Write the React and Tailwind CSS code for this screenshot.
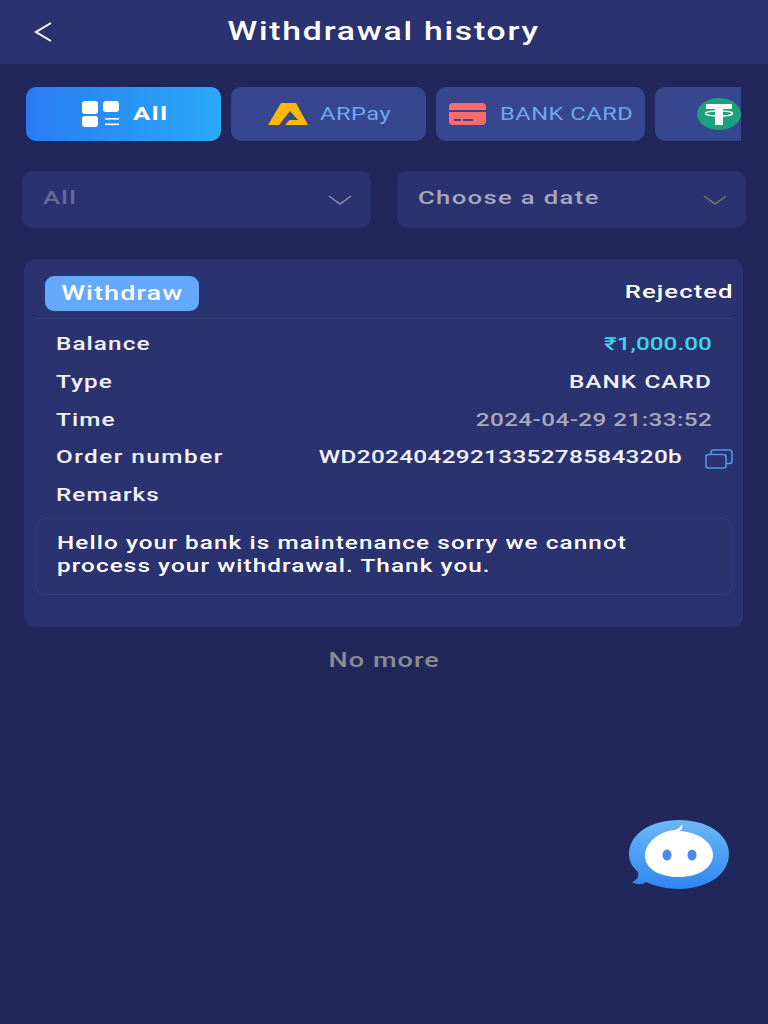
const font = 'font-["Roboto",sans-serif]';

function BackIcon() {
  return (
    <svg width="18" height="20" viewBox="0 0 18 20" fill="none" stroke="#fff" strokeWidth="2" className="absolute left-[34px] top-[22px]">
      <path d="M17 1L2 10L17 19" />
    </svg>
  );
}

function AllIcon() {
  return (
    <svg width="38" height="26" viewBox="0 0 38 26" className="shrink-0">
      <rect x="0" y="0" width="16" height="13" rx="3" fill="#fff" />
      <rect x="21" y="0" width="16" height="11" rx="3" fill="#fff" />
      <rect x="0" y="15" width="16" height="11" rx="3" fill="#fff" />
      <rect x="23" y="17" width="14" height="1.6" fill="#fff" />
      <rect x="23" y="22.5" width="14" height="1.6" fill="#fff" />
    </svg>
  );
}

function ArPayIcon() {
  return (
    <svg width="40" height="22" viewBox="0 0 40 22" className="shrink-0">
      <path d="M13 0H28L40 22H17L21.5 17H30L22 8L11 22H0Z" fill="#fcb900" />
    </svg>
  );
}

function BankIcon() {
  return (
    <svg width="37" height="22" viewBox="0 0 37 22" className="shrink-0">
      <path d="M4 0H33A4 4 0 0 1 37 4V7H0V4A4 4 0 0 1 4 0Z" fill="#ff6b6b" />
      <path d="M0 9H37V18A4 4 0 0 1 33 22H4A4 4 0 0 1 0 18Z" fill="#ff6b6b" />
      <rect x="5" y="16" width="7" height="2" fill="#36478f" />
      <rect x="14" y="16" width="10" height="2" fill="#36478f" />
    </svg>
  );
}

function TetherIcon() {
  return (
    <svg width="44" height="32" viewBox="0 0 44 32" className="shrink-0">
      <ellipse cx="22" cy="16" rx="22" ry="16" fill="#1ba27a" />
      <rect x="9" y="6" width="26" height="5" fill="#fff" />
      <rect x="18" y="6" width="8" height="21" fill="#fff" />
      <ellipse cx="22" cy="15.5" rx="13.5" ry="2.6" fill="none" stroke="#fff" strokeWidth="1.4" />
    </svg>
  );
}

function CopyIcon() {
  return (
    <svg width="28" height="20" viewBox="0 0 28 20" fill="none" stroke="#4f97ec" strokeWidth="1.6" className="mt-[5px]">
      <rect x="1" y="5.5" width="20" height="13.5" rx="2.5" />
      <path d="M6 5.5V3.5A2.5 2.5 0 0 1 8.5 1H24.5A2.5 2.5 0 0 1 27 3.5V12A2.5 2.5 0 0 1 24.5 14.5H21" />
    </svg>
  );
}

function BotIcon() {
  return (
    <svg width="100" height="72" viewBox="0 0 100 72">
      <defs>
        <linearGradient id="botFill" x1="0" y1="0" x2="0" y2="1">
          <stop offset="0" stopColor="#6cb8f6" />
          <stop offset="1" stopColor="#2f86f0" />
        </linearGradient>
      </defs>
      <path
        d="M50 1C78 1 100 15 100 35C100 56 77 70 50 70C37 70 26 67 17 63C13 66 8 66 3 63C8 61 10 58 9 53C3 48 0 42 0 35C0 15 22 1 50 1Z"
        fill="url(#botFill)"
      />
      <path
        d="M16 37C16 23 31 12 46 11C49 10 52 8 53 5C54 8 53 11 50 12C69 13 84 23 84 36C84 49 69 58 50 58C31 58 16 50 16 37Z"
        fill="#fff"
      />
      <ellipse cx="38" cy="36" rx="4.5" ry="5.5" fill="#4a8bf0" />
      <ellipse cx="63" cy="36" rx="4.5" ry="5.5" fill="#4a8bf0" />
    </svg>
  );
}

function Tab({ width, active, icon, label }) {
  return (
    <div
      className={`h-[54px] shrink-0 rounded-[10px] flex items-center ${width} ${
        active ? 'bg-gradient-to-r from-[#2b7bf3] to-[#2aa9f6]' : 'bg-[#36478f]'
      }`}
    >
      {icon}
      {label}
    </div>
  );
}

function Filter({ label, color, chevron, width }) {
  return (
    <div className={`h-[57px] rounded-[10px] bg-[#2b3270] flex items-center justify-between pl-[21px] pr-[19px] ${width}`}>
      <span className={`inline-block mb-[3px] origin-left scale-x-[1.35] text-[19px] font-medium tracking-[1px] ${color}`}>{label}</span>
      <svg width="24" height="10" viewBox="0 0 24 10" fill="none" stroke={chevron} strokeWidth="1.5">
        <path d="M1 1L12 9L23 1" />
      </svg>
    </div>
  );
}

function Row({ label, children }) {
  return (
    <div className="h-[37.7px] flex items-center justify-between pl-[32px] pr-[31px] text-[18px] font-medium tracking-[0.8px] text-[#f2f3f8]">
      <span className="inline-block origin-left scale-x-[1.35]">{label}</span>
      {children}
    </div>
  );
}

const rightText = 'inline-block origin-right scale-x-[1.35]';

export default function App() {
  return (
    <div className={`relative min-h-screen bg-[#21275b] text-white ${font}`}>
      {/* Header */}
      <header className="h-[64px] bg-[#2b3270] flex items-center justify-center relative">
        <BackIcon />
        <h1 className="inline-block scale-x-[1.35] text-[25px] font-medium tracking-[1.3px]">Withdrawal history</h1>
      </header>

      {/* Pay type tabs */}
      <div className="ml-[26px] mr-[27px] mt-[23px] flex gap-[10px] overflow-hidden">
        <Tab
          width="w-[195px] pl-[56px] gap-[13px]"
          active
          icon={<AllIcon />}
          label={<span className="inline-block origin-left scale-x-[1.35] text-[19px] font-bold tracking-[1.2px]">All</span>}
        />
        <Tab
          width="w-[195px] pl-[37px] gap-[12px]"
          icon={<ArPayIcon />}
          label={<span className="inline-block origin-left scale-x-[1.35] text-[17.5px] tracking-[0.4px] text-[#6fa8f0]">ARPay</span>}
        />
        <Tab
          width="w-[209px] pl-[13px] gap-[14px]"
          icon={<BankIcon />}
          label={<span className="inline-block origin-left scale-x-[1.35] whitespace-nowrap text-[17.5px] tracking-[0.4px] text-[#6fa8f0]">BANK CARD</span>}
        />
        <div className="h-[54px] w-[195px] shrink-0 rounded-[10px] bg-[#36478f] flex items-center pl-[42px]">
          <TetherIcon />
        </div>
      </div>

      {/* Filters */}
      <div className="ml-[22px] mr-[22px] mt-[30px] flex justify-between">
        <Filter width="w-[349px]" label="All" color="text-[#666b98]" chevron="#8d90ad" />
        <Filter width="w-[349px]" label="Choose a date" color="text-[#a6a8bc]" chevron="#77766f" />
      </div>

      {/* Record card */}
      <section className="ml-[24px] mr-[25px] mt-[31px] h-[368px] rounded-[10px] bg-[#2b3270] pt-[17px]">
        <div className="h-[43px] ml-[12px] mr-[11px] pl-[9px] pb-[7px] flex items-center justify-between border-b border-[#363e80]">
          <span className="w-[154px] h-[35px] rounded-[9px] bg-[#64a8ff] flex items-center justify-center pb-[1px]">
            <span className="inline-block scale-x-[1.35] text-[20px] font-medium tracking-[0.8px]">Withdraw</span>
          </span>
          <span className={`${rightText} -mr-[2px] mb-[2px] text-[19px] font-medium tracking-[0.8px]`}>Rejected</span>
        </div>
        <div className="mt-[6px]">
          <Row label="Balance">
            <span className={`${rightText} tracking-[0px] text-[#3fd4ec]`}>₹1,000.00</span>
          </Row>
          <Row label="Type">
            <span className={rightText}>BANK CARD</span>
          </Row>
          <Row label="Time">
            <span className={`${rightText} tracking-[0.3px] text-[#a6a8bc]`}>2024-04-29 21:33:52</span>
          </Row>
          <div className="h-[37.7px] flex items-center justify-between pl-[32px] pr-[10px] text-[18px] font-medium tracking-[0.8px] text-[#f2f3f8]">
            <span className="inline-block origin-left scale-x-[1.35] tracking-[1.1px]">Order number</span>
            <span className="flex items-center gap-[23px]">
              <span className={`${rightText} tracking-[0.25px]`}>WD2024042921335278584320b</span>
              <CopyIcon />
            </span>
          </div>
          <Row label="Remarks" />
        </div>
        <div className="mt-[5px] ml-[11px] mr-[10px] h-[77px] rounded-[10px] border border-[#343b80] pl-[21px] pb-[6px] flex items-center">
          <p className="w-[435px] origin-left scale-x-[1.35] text-[18px] leading-[23px] tracking-[0.8px] font-medium">
            Hello your bank is maintenance sorry we cannot process your withdrawal. Thank you.
          </p>
        </div>
      </section>

      <p className="mt-[18px] text-center">
        <span className="inline-block scale-x-[1.35] text-[20px] font-medium tracking-[0.8px] text-[#8b8c91]">No more</span>
      </p>

      {/* Floating support button */}
      <div className="absolute left-[629px] top-[819px]">
        <BotIcon />
      </div>
    </div>
  );
}
